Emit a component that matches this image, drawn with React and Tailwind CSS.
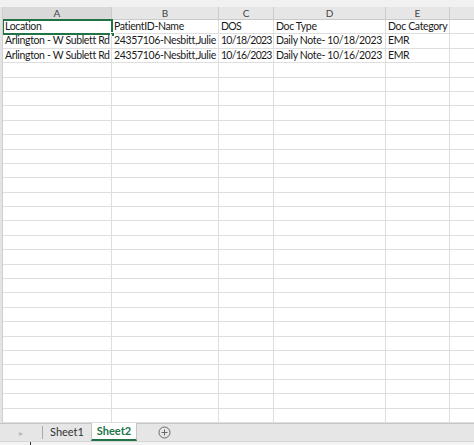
import React from "react";

const cols = [109, 107, 55, 112, 64, 27];
const headers = ["A", "B", "C", "D", "E", ""];
const data = [
  ["Location", "PatientID-Name", "DOS", "Doc Type", "Doc Category", ""],
  ["Arlington - W Sublett Rd", "24357106-Nesbitt,Julie", "10/18/2023", "Daily Note- 10/18/2023", "EMR", ""],
  ["Arlington - W Sublett Rd", "24357106-Nesbitt,Julie", "10/16/2023", "Daily Note- 10/16/2023", "EMR", ""],
];
const rows = Array.from({ length: 28 }, (_, i) => data[i] || ["", "", "", "", "", ""]);

export default function App() {
  return (
    <div
      className="w-[474px] h-[445px] bg-white overflow-hidden text-[#1a1a1a]"
      style={{ fontFamily: "Lato, 'Open Sans', sans-serif" }}
    >
      <div className="h-[7px] bg-[#f1f1f1]" />
      <div className="flex h-[416px] overflow-hidden">
        <div className="w-[3px] bg-[#e4e4e4] border-r border-[#cfcfcf] shrink-0" />
        <div className="flex-1 overflow-hidden">
          <div className="flex h-[13px] bg-[#e6e6e6] border-b border-[#c9c9c9]">
            {headers.map((h, i) => (
              <div
                key={i}
                style={{ width: cols[i] }}
                className={`shrink-0 border-r border-[#cbcbcb] text-[10px] leading-[12px] text-center text-[#444] ${i === 0 ? "bg-[#d9d9d9]" : ""}`}
              >
                {h}
              </div>
            ))}
          </div>
          {rows.map((r, ri) => (
            <div key={ri} className="flex h-[14.4px] relative">
              {r.map((c, ci) => (
                <div
                  key={ci}
                  style={{ width: cols[ci] }}
                  className={`shrink-0 h-full border-r border-b border-[#dedede] text-[10.5px] leading-[13px] pl-[2px] whitespace-nowrap overflow-visible ${ci === 2 ? "tracking-[-0.75px]" : "tracking-[-0.35px]"}`}
                >
                  {c}
                </div>
              ))}
              {ri === 0 && (
                <div className="absolute left-[-1px] top-[-1px] w-[111px] h-[16px] border-2 border-[#217346] pointer-events-none">
                  <div className="absolute right-[-4px] bottom-[-4px] w-[5px] h-[5px] bg-[#217346] border border-white" />
                </div>
              )}
            </div>
          ))}
        </div>
      </div>
      <div className="h-[18px] bg-[#e6e6e6] border-t border-[#c6c6c6] flex items-stretch">
        <div className="w-[43px] flex items-center justify-center text-[#b8b8b8] text-[8px] border-r border-[#a9a9a9] my-[2px]">
          ▸
        </div>
        <div className="w-[48px] flex items-center justify-center text-[11px] text-[#333]">Sheet1</div>
        <div className="w-[46px] bg-white flex items-center justify-center text-[11px] font-bold text-[#217346] border-b-2 border-[#217346] border-x border-x-[#c6c6c6] -mt-px">
          Sheet2
        </div>
        <div className="w-[54px] flex items-center justify-center">
          <svg width="13" height="13" viewBox="0 0 13 13">
            <circle cx="6.5" cy="6.5" r="5.5" fill="none" stroke="#666" strokeWidth="1" />
            <path d="M6.5 3.5v6M3.5 6.5h6" stroke="#666" strokeWidth="1" />
          </svg>
        </div>
      </div>
      <div className="h-[4px] bg-[#f3f3f3] border-t border-[#d6d6d6] relative">
        <div className="absolute left-[30px] top-0 w-[1px] h-[3px] bg-[#333]" />
      </div>
    </div>
  );
}
